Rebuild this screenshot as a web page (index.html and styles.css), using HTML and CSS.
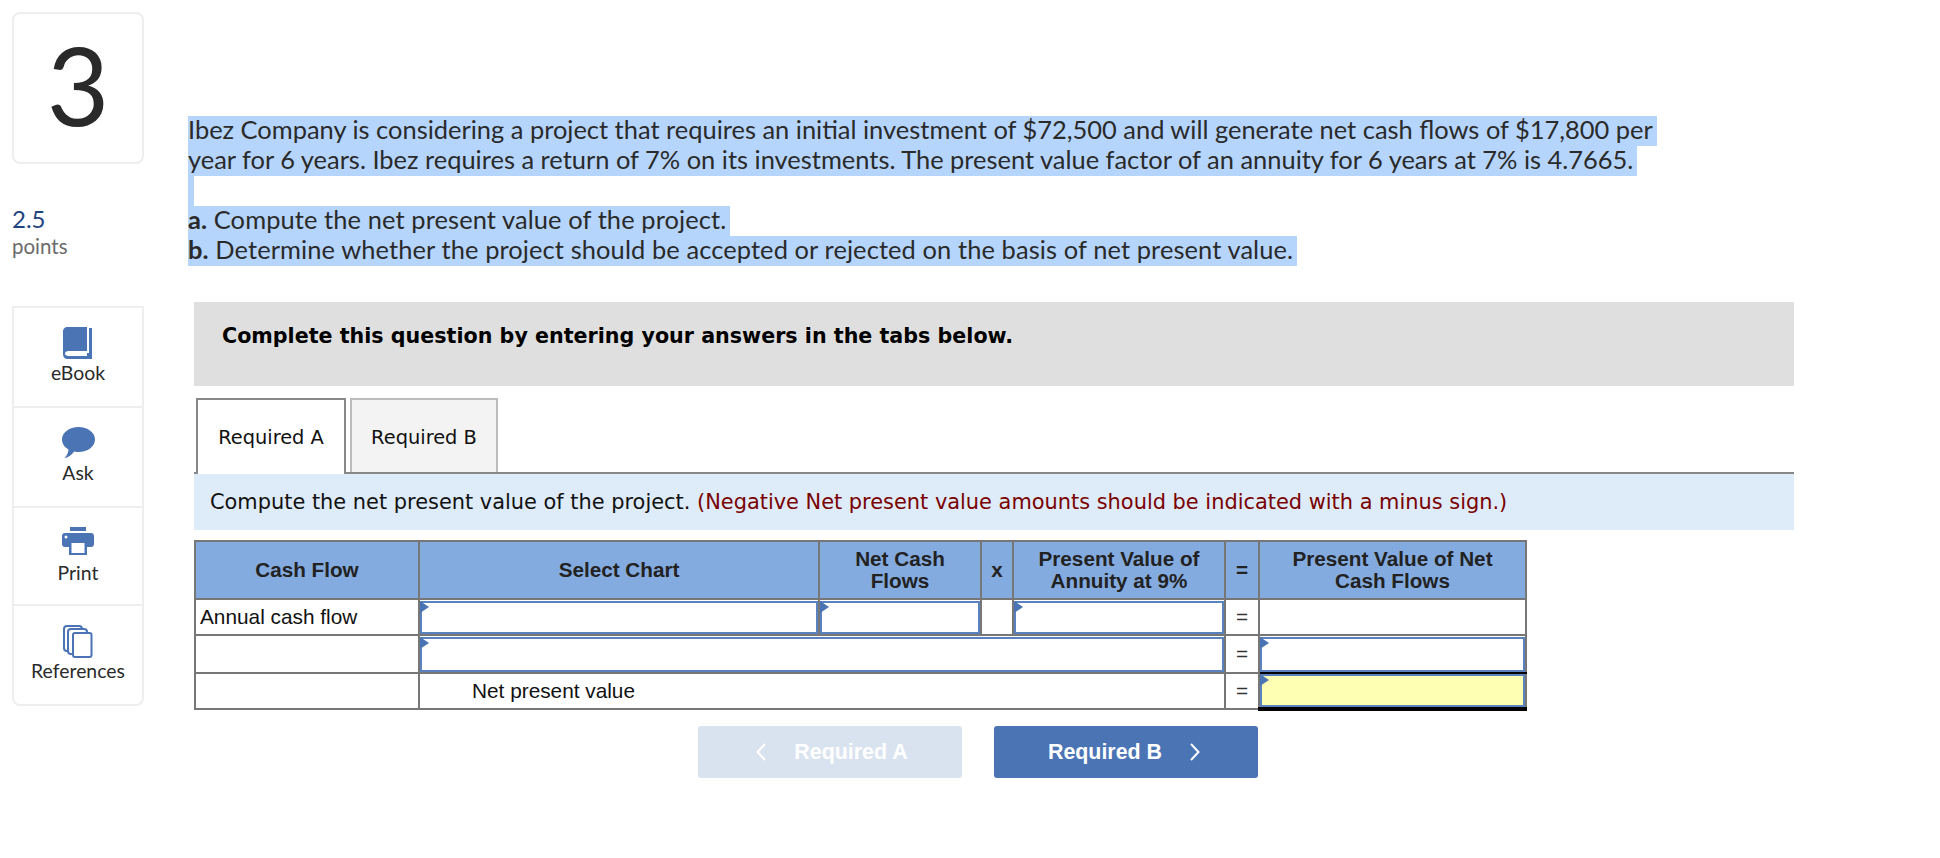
FILE: index.html
```html
<!DOCTYPE html>
<html lang="en">
  <head>
    <meta charset="UTF-8" />
    <title>Question 3</title>
    <link rel="stylesheet" href="styles.css">
  </head>

  <body>
    <aside class="side">
      <div class="number">3</div>
      <div class="score">
        <div class="score-value">2.5</div>
        <div class="score-label">points</div>
      </div>

      <nav class="tools">
        <div class="tool">
          <div class="tool-icon">
            <svg width="30" height="33" viewBox="0 0 30 33">
              <path d="M4 0H24V24H5.500C3.500 24 2 25 2 26.500S3.500 29 5.500 29H24V26H26V1H29V32H5C2 32 0 30 0 27V4C0 2 2 0 4 0Z" fill="#4a74b4" />
            </svg>
          </div>
          <span>eBook</span>
        </div>
        <div class="tool">
          <div class="tool-icon">
            <svg width="33" height="32" viewBox="0 0 33 32">
              <path d="M16.500 0C25.600 0 33 5.500 33 12.500S25.600 25 16.500 25C15 25 13.500 24.900 12.200 24.500C10 27.500 6.500 30.500 2.500 31C5 28.500 6.300 25.500 6.500 22.500C2.500 20.200 0 16.500 0 12.500C0 5.500 7.400 0 16.500 0Z" fill="#4a74b4" />
            </svg>
          </div>
          <span>Ask</span>
        </div>
        <div class="tool">
          <div class="tool-icon">
            <svg class="print" width="32" height="28" viewBox="0 0 32 28">
              <rect x="8" y="0" width="16" height="4" fill="#4a74b4" />
              <path d="M3 6H29C30.700 6 32 7.300 32 9V17C32 18.700 30.700 20 29 20H25V28H7V20H3C1.300 20 0 18.700 0 17V9C0 7.300 1.300 6 3 6Z" fill="#4a74b4" />
              <rect x="9.500" y="16" width="13" height="10" fill="#fff" />
              <circle cx="4" cy="10" r="1.500" fill="#fff" />
            </svg>
          </div>
          <span>Print</span>
        </div>
        <div class="tool">
          <div class="tool-icon">
            <svg width="30" height="33" viewBox="0 0 30 33" fill="#fff" stroke="#4a74b4" stroke-width="2">
              <rect x="1" y="1" width="18" height="25" rx="3" />
              <rect x="5" y="4" width="19" height="25" rx="3" />
              <rect x="10" y="8" width="18.500" height="24" rx="2" />
            </svg>
          </div>
          <span>References</span>
        </div>
      </nav>
    </aside>

    <main class="main">
      <div class="question">
        <span class="line">Ibez Company is considering a project that requires an initial investment of $72,500 and will generate net cash flows of $17,800 per</span>
        <span class="line">year for 6 years. Ibez requires a return of 7% on its investments. The present value factor of an annuity for 6 years at 7% is 4.7665.</span>
        <span class="line blank">&nbsp;</span>
        <span class="line part"><b>a.</b> Compute the net present value of the project.</span>
        <span class="line part"><b>b.</b> Determine whether the project should be accepted or rejected on the basis of net present value.</span>
      </div>

      <div class="work">
        <div class="prompt">Complete this question by entering your answers in the tabs below.</div>

        <div class="tabs">
          <div class="tab active">Required A</div>
          <div class="tab">Required B</div>
        </div>

        <div class="instruction">
          Compute the net present value of the project.
          <span class="note">(Negative Net present value amounts should be indicated with a minus sign.)</span>
        </div>

        <table class="chart">
          <colgroup>
            <col class="c-flow" />
            <col class="c-select" />
            <col class="c-net" />
            <col class="c-x" />
            <col class="c-pv" />
            <col class="c-eq" />
            <col class="c-result" />
          </colgroup>
          <thead>
            <tr>
              <th>Cash Flow</th>
              <th>Select Chart</th>
              <th>Net Cash<br />Flows</th>
              <th>x</th>
              <th>Present Value of<br />Annuity at 9%</th>
              <th>=</th>
              <th>Present Value of Net<br />Cash Flows</th>
            </tr>
          </thead>
          <tbody>
            <tr class="row-a">
              <td class="label">Annual cash flow</td>
              <td class="slot"><div class="ans"></div></td>
              <td class="slot"><div class="ans"></div></td>
              <td></td>
              <td class="slot"><div class="ans"></div></td>
              <td class="eq">=</td>
              <td></td>
            </tr>
            <tr class="row-b">
              <td></td>
              <td class="slot" colspan="4"><div class="ans"></div></td>
              <td class="eq">=</td>
              <td class="slot total"><div class="ans"></div></td>
            </tr>
            <tr class="row-c">
              <td></td>
              <td class="label net" colspan="4">Net present value</td>
              <td class="eq">=</td>
              <td class="slot total"><div class="ans yellow"></div></td>
            </tr>
          </tbody>
        </table>
      </div>

      <div class="pager">
        <button class="btn off">
          <svg width="10" height="18" viewBox="0 0 10 18"><polyline points="9,1 1.500,9 9,17" /></svg>
          Required A
        </button>
        <button class="btn next">
          Required B
          <svg width="10" height="18" viewBox="0 0 10 18"><polyline points="1,1 8.500,9 1,17" /></svg>
        </button>
      </div>
    </main>
  </body>
</html>
```

FILE: styles.css
```css
* {
  margin: 0;
  padding: 0;
  box-sizing: border-box;
}

body {
  display: flex;
  background: #fff;
  color: #2a2a2a;
  font-family: Lato, "Open Sans", sans-serif;
}

.side {
  width: 188px;
  padding: 12px 0 0 12px;
  flex-shrink: 0;
}

.number {
  width: 132px;
  height: 152px;
  display: flex;
  align-items: center;
  justify-content: center;
  padding-bottom: 8px;
  border: 2px solid #eee;
  border-radius: 8px;
  font-size: 108px;
}

.score {
  margin-top: 41px;
}

.score-value {
  color: #1f4480;
  font-size: 24px;
  line-height: 28px;
}

.score-label {
  color: #6b6b6b;
  font-size: 20.500px;
  line-height: 27px;
}

.tools {
  width: 132px;
  height: 400px;
  margin-top: 46px;
  display: grid;
  grid-template-rows: 100px 100px 98px 1fr;
  border: 2px solid #eee;
  border-radius: 0 0 8px 8px;
}

.tool {
  padding-top: 14px;
  display: flex;
  align-items: center;
  flex-direction: column;
  border-bottom: 2px solid #eee;
  font-size: 19.400px;
}

.tool:last-child {
  border-bottom: 0;
}

.tool-icon {
  height: 42px;
  display: flex;
  align-items: center;
}

.tool-icon .print {
  margin-bottom: 4px;
}

.tool span {
  line-height: 18px;
}

.main {
  padding-top: 116px;
  flex: 1;
}

.question {
  font-size: 25.450px;
  line-height: 26px;
}

.line {
  display: block;
  width: fit-content;
  padding: 0 4px 4px 0;
  background-color: #b6d5fc;
}

.line.part {
  letter-spacing: 0.100px;
}

.line.blank {
  width: 6px;
  padding: 0;
  height: 30px;
  overflow: hidden;
}

.work {
  width: 1600px;
  margin: 36px 0 0 6px;
}

.prompt {
  height: 84px;
  padding: 19px 28px;
  background-color: #dfdfdf;
  color: #000;
  font-family: "DejaVu Sans", sans-serif;
  font-size: 20.650px;
  font-weight: 700;
  line-height: 30px;
}

.tabs {
  display: flex;
  gap: 4px;
  height: 76px;
  margin-top: 12px;
  padding-left: 2px;
  border-bottom: 2px solid #888;
}

.tab {
  width: 148px;
  height: 74px;
  padding-top: 26px;
  text-align: center;
  color: #111;
  font-family: "DejaVu Sans", sans-serif;
  font-size: 19.400px;
  background-color: #f3f3f3;
  border: 2px solid #bbb;
  border-bottom: 0;
}

.tab.active {
  width: 150px;
  height: 76px;
  background-color: #fff;
  border-color: #888;
}

.instruction {
  height: 56px;
  padding-left: 16px;
  background-color: #deebf8;
  color: #111;
  font-family: "DejaVu Sans", sans-serif;
  font-size: 20.900px;
  line-height: 56px;
}

.note {
  color: #7a0000;
}

.chart {
  width: 1331px;
  margin-top: 10px;
  border-collapse: collapse;
  table-layout: fixed;
  font-family: "Liberation Sans", Arial, sans-serif;
  font-size: 20.800px;
}

.c-flow { width: 224px; }
.c-select { width: 400px; }
.c-net { width: 162px; }
.c-x { width: 32px; }
.c-pv { width: 212px; }
.c-eq { width: 34px; }
.c-result { width: 267px; }

.chart th,
.chart td {
  border: 2px solid #777;
}

.chart th {
  height: 58px;
  background-color: #84abdf;
  color: #222;
  font-size: 20.700px;
  line-height: 22px;
}

.row-a td { height: 36px; }
.row-b td { height: 38px; }
.row-c td { height: 36px; }

.label {
  padding-left: 4px;
  color: #111;
}

.label.net {
  padding-left: 52px;
}

.eq {
  text-align: center;
  color: #333;
}

.slot {
  padding: 0;
}

.ans {
  position: relative;
  height: 33px;
  border: 2px solid #5a82bf;
  background-color: #fff;
}

.row-b .ans {
  height: 35px;
}

.ans::before {
  content: "";
  position: absolute;
  top: -2px;
  left: -2px;
  border-left: 9px solid #4a74b4;
  border-top: 6px solid transparent;
  border-bottom: 6px solid transparent;
}

.ans.yellow {
  background-color: #ffffb3;
}

.chart td.total {
  border-bottom-color: #000;
}

.row-c td.total {
  border-bottom-width: 4px;
}

.pager {
  display: flex;
  gap: 32px;
  margin: 15px 0 0 510px;
}

.btn {
  width: 264px;
  height: 52px;
  display: flex;
  align-items: center;
  justify-content: center;
  gap: 28px;
  border: 0;
  border-radius: 3px;
  background-color: #4a74b4;
  color: #fff;
  font-family: "Liberation Sans", Arial, sans-serif;
  font-size: 21.400px;
  font-weight: 700;
}

.btn.off {
  padding-left: 4px;
  background-color: #d9e3f0;
}

.btn.next {
  padding-right: 4px;
}

.btn svg {
  fill: none;
  stroke: #fff;
  stroke-width: 2;
}
```
